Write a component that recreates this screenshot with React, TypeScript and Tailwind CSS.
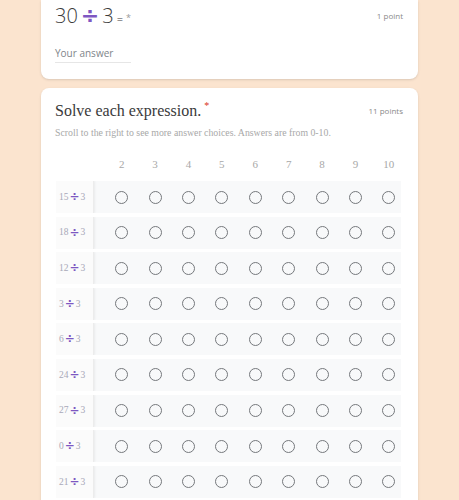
import React from 'react';

const columns = ['2', '3', '4', '5', '6', '7', '8', '9', '10'];
const rows = ['15', '18', '12', '3', '6', '24', '27', '0', '21'];

const Divide = ({ className }: { className: string }) => (
  <span className={`font-bold text-[#7e57c2] ${className}`} style={{ fontFamily: '"DejaVu Sans", sans-serif' }}>
    ÷
  </span>
);

const Radio = () => (
  <div className="w-[13px] h-[13px] rounded-full border-[1.5px] border-[#75787c]" />
);

export default function App() {
  return (
    <div className="h-[500px] bg-[#fbe4cf] px-[41px] overflow-hidden" style={{ fontFamily: '"Open Sans", sans-serif' }}>
      {/* short answer card, scrolled partly off the top */}
      <div className="bg-white rounded-b-lg shadow-sm px-[14px] pt-[4px] pb-[16px]">
        <div className="flex items-start justify-between">
          <div className="flex items-baseline leading-[24px] text-[#3c3c3c]">
            <span className="text-[20px] font-light">30</span>
            <Divide className="text-[22px] mx-[3px]" />
            <span className="text-[20px] font-light">3</span>
            <span className="text-[11px] ml-[3px]">=</span>
            <span className="text-[9px] text-[#999] ml-[3px] self-start mt-[2px]">*</span>
          </div>
          <span className="text-[8px] text-[#8a8a8a] mt-[6px] mr-[1px]">1 point</span>
        </div>
        <div className="mt-[15px] w-[76px] pb-[2px] border-b border-[#e6e6e6] text-[10px] leading-[14px] text-[#80858a]">
          Your answer
        </div>
      </div>

      {/* grid question card */}
      <div className="mt-[9px] bg-white rounded-lg shadow-sm pl-[14px] pr-[20px] pt-[11px] pb-[40px]">
        <div className="flex items-start justify-between">
          <div className="flex items-start leading-[24px] text-[#3a3a3a]" style={{ fontFamily: '"Liberation Serif", serif' }}>
            <span className="text-[16px]">Solve each expression.</span>
            <span className="text-[10px] text-[#d93025] ml-[3px] leading-[14px]">*</span>
          </div>
          <span className="text-[8px] text-[#8a8a8a] mt-[6px] -mr-[5px]">11 points</span>
        </div>
        <div className="mt-[3px] text-[9.8px] leading-[14px] text-[#a8a8a8]" style={{ fontFamily: '"Liberation Serif", serif' }}>
          Scroll to the right to see more answer choices. Answers are from 0-10.
        </div>

        <div className="mt-[16px] ml-[1px] w-[345px]" style={{ fontFamily: '"Liberation Serif", serif' }}>
          <div className="flex h-[16px] items-center">
            <div className="w-[38px] shrink-0" />
            <div className="flex pl-[11px]">
              {columns.map((c) => (
                <div key={c} className="w-[33.4px] shrink-0 text-center text-[11px] text-[#a8a8a8]">
                  {c}
                </div>
              ))}
            </div>
          </div>

          <div className="mt-[9px] flex flex-col gap-[3.6px]">
            {rows.map((r) => (
              <div key={r} className="flex h-[32px] bg-[#f8f9fa] overflow-hidden">
                <div className="w-[38px] shrink-0 flex items-center pl-[3px] bg-[#fbfbfb] border-r border-[#ececec] shadow-[1px_0_2px_rgba(0,0,0,0.06)] text-[9.5px] text-[#a8a8b8]">
                  <span>{r}</span>
                  <Divide className="text-[12px] mx-[1px]" />
                  <span>3</span>
                </div>
                <div className="flex pl-[11px] items-center">
                  {columns.map((c) => (
                    <div key={c} className="w-[33.4px] shrink-0 flex justify-center">
                      <Radio />
                    </div>
                  ))}
                </div>
              </div>
            ))}
          </div>
        </div>
      </div>
    </div>
  );
}
